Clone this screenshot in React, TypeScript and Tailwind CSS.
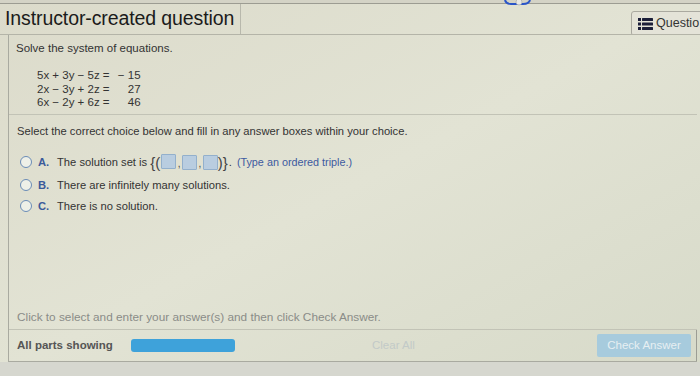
import React from "react";

function ListIcon() {
  return (
    <svg width="15" height="12" viewBox="0 0 15 12" className="shrink-0">
      <rect x="0" y="0" width="3" height="3" fill="#1c1f3a" />
      <rect x="4" y="0" width="11" height="3" rx="0.5" fill="#1c1f3a" />
      <rect x="0" y="4.5" width="3" height="3" fill="#1c1f3a" />
      <rect x="4" y="4.5" width="11" height="3" rx="0.5" fill="#1c1f3a" />
      <rect x="0" y="9" width="3" height="3" fill="#1c1f3a" />
      <rect x="4" y="9" width="11" height="3" rx="0.5" fill="#1c1f3a" />
    </svg>
  );
}

function Radio() {
  return (
    <span className="ml-[3px] w-[12px] h-[12px] rounded-full border-[1.5px] border-[#6a8cb6] bg-[#eef0e8] shrink-0" />
  );
}

function Box() {
  return <span className="inline-block w-[15px] h-[15px] bg-[#b9cde0] border border-[#93b0cc] rounded-[1px]" />;
}

export default function App() {
  const eqs: [string, string][] = [
    ["5x + 3y − 5z =", "− 15"],
    ["2x − 3y + 2z =", "27"],
    ["6x − 2y + 6z =", "46"],
  ];
  return (
    <div
      className="relative w-[700px] h-[376px] overflow-hidden bg-gradient-to-br from-[#dcdbcb] via-[#e2e3d4] to-[#d7dac9] text-[#333]"
      style={{ fontFamily: '"Liberation Sans", Arial, sans-serif' }}
    >
      {/* top logo fragment */}
      <svg className="absolute left-[503px] top-0" width="30" height="6" viewBox="0 0 30 6">
        <path d="M2 0 Q3 4 8 4 L20 4 Q26 4 27 0" fill="none" stroke="#2a55c8" strokeWidth="2" />
        <circle cx="16" cy="2" r="3" fill="#e8e8e4" stroke="#9aa0a8" strokeWidth="0.6" />
      </svg>

      {/* top strip */}
      <div className="h-[4px] border-b border-[#9c9c92] bg-[#d4d3c6]" />

      {/* header */}
      <div className="flex h-[31px] border-b border-[#b4b4a8] overflow-hidden">
        <div className="w-[241px] shrink-0 border-r border-[#b8b8ac] pl-[5px] flex items-center">
          <span className="text-[19.5px] leading-none text-[#1b1b1b] tracking-[-0.1px]">Instructor-created question</span>
        </div>
        <div className="ml-[390px] mt-[7px] shrink-0 w-[90px] h-[25px] border border-[#aaa9a0] rounded-[3px] bg-[#e4e3d8] flex items-center pl-[6px] gap-[3px]">
          <ListIcon />
          <span className="text-[12.5px] text-[#333]">Questio</span>
        </div>
      </div>

      {/* main panel */}
      <div className="ml-[8px] w-[689px] h-[327px] border-l border-b border-[#a9aaa0] flex flex-col">
        {/* section 1 */}
        <div className="h-[80px] shrink-0 border-b border-[#c2c3b6] pl-[7px] pt-[6px]">
          <div className="text-[11.5px] leading-[14px]">Solve the system of equations.</div>
          <div className="mt-[14px] ml-[21px] grid grid-cols-[auto_25px] gap-x-[6px] text-[11.5px] leading-[13.5px] w-fit">
            {eqs.map(([l, r]) => (
              <React.Fragment key={l}>
                <span className="whitespace-pre">{l}</span>
                <span className="text-right whitespace-pre">{r}</span>
              </React.Fragment>
            ))}
          </div>
        </div>

        {/* section 2 */}
        <div className="flex-1 pl-[8px] pt-[9px]">
          <div className="text-[11.2px] leading-[14px]">
            Select the correct choice below and fill in any answer boxes within your choice.
          </div>
          <div className="mt-[14px] h-[20px] flex items-center text-[11.2px]">
            <Radio />
            <span className="ml-[6px] w-[19px] font-bold text-[#3a5a9a]">A.</span>
            <span>The solution set is</span>
            <span className="ml-[3px] flex items-center text-[15px] leading-none text-[#444]">
              <span>{"{("}</span>
              <span className="ml-[1px]"><Box /></span>
              <span className="text-[10px] mx-[1.5px] self-end mb-[2px]">,</span>
              <Box />
              <span className="text-[10px] mx-[1.5px] self-end mb-[2px]">,</span>
              <Box />
              <span>{")}"}</span>
            </span>
            <span className="ml-[1px]">.</span>
            <span className="ml-[5px] text-[10.8px] text-[#3d5aa0]">(Type an ordered triple.)</span>
          </div>
          <div className="mt-[5px] h-[16px] flex items-center text-[11.2px]">
            <Radio />
            <span className="ml-[6px] w-[19px] font-bold text-[#3a5a9a]">B.</span>
            <span>There are infinitely many solutions.</span>
          </div>
          <div className="mt-[5px] h-[16px] flex items-center text-[11.2px]">
            <Radio />
            <span className="ml-[6px] w-[19px] font-bold text-[#3a5a9a]">C.</span>
            <span>There is no solution.</span>
          </div>
        </div>

        {/* section 3 */}
        <div className="shrink-0 border-b border-[#c2c3b6] pl-[8px] pb-[5px]">
          <div className="text-[11.8px] leading-[14px] text-[#8a8c88]">
            Click to select and enter your answer(s) and then click Check Answer.
          </div>
        </div>

        {/* footer */}
        <div className="h-[31px] shrink-0 flex items-center pl-[8px] border-r border-[#9c9d94]">
          <span className="w-[114px] text-[11.5px] font-bold text-[#555]">All parts showing</span>
          <span className="w-[104px] h-[13px] rounded-[3px] bg-[#3ea2da]" />
          <span className="ml-[137px] text-[11.5px] text-[#c2cac8]">Clear All</span>
          <span className="ml-auto mr-[5px] w-[94px] h-[23px] rounded-[2px] bg-[#a7cbdd] flex items-center justify-center text-[11.5px] text-[#e6eff2]">
            Check Answer
          </span>
        </div>
      </div>

      {/* bottom strip */}
      <div className="h-[14px] bg-[#d6d7cf]" />
    </div>
  );
}
